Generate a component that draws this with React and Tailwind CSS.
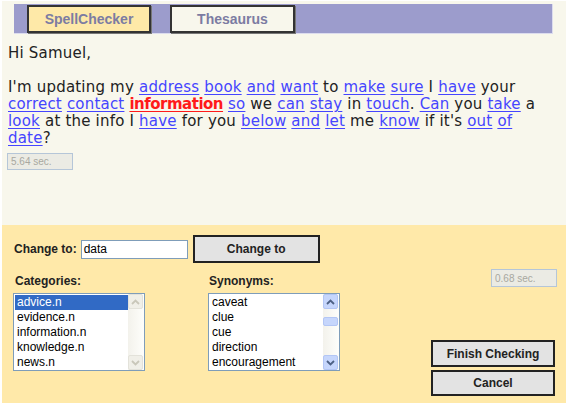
import React from "react";

function L({ children }) {
  return <span className="text-[#4545ff] underline decoration-1 underline-offset-2">{children}</span>;
}

function Chevron({ up, color }) {
  return (
    <svg width="9" height="6" viewBox="0 0 9 6">
      <path
        d={up ? "M1 5 L4.5 1.5 L8 5" : "M1 1 L4.5 4.5 L8 1"}
        fill="none"
        stroke={color}
        strokeWidth="1.8"
      />
    </svg>
  );
}

function Scrollbar({ active }) {
  const btn = active
    ? "bg-[#c6d6fc] border border-[#b3c6f5]"
    : "bg-[#f0efe8] border border-[#e3e2da]";
  const col = active ? "#4d6185" : "#c9c7ba";
  return (
    <div className="w-[16px] h-full flex flex-col bg-gradient-to-r from-[#f3f2ec] to-[#fefefb]">
      <div className={`h-[15px] w-[15px] rounded-[2px] flex items-center justify-center ${btn}`}>
        <Chevron up color={col} />
      </div>
      <div className="flex-1 relative">
        {active && (
          <div className="absolute left-0 top-[8px] h-[9px] w-[15px] rounded-[2px] bg-[#c6d6fc] border border-[#b3c6f5]" />
        )}
      </div>
      <div className={`h-[15px] w-[15px] rounded-[2px] flex items-center justify-center ${btn}`}>
        <Chevron color={col} />
      </div>
    </div>
  );
}

function ListBox({ items, selected, active }) {
  return (
    <div className="w-[132px] h-[78px] border border-[#7f9db9] bg-white flex font-['Liberation_Sans',sans-serif] text-[12px] text-black">
      <div className="flex-1 pt-[1px] pl-[1px] overflow-hidden">
        {items.map((it, i) => (
          <div
            key={it}
            className={`h-[15px] leading-[15px] px-[2px] whitespace-nowrap ${
              i === selected ? "bg-[#316ac5] text-white" : ""
            }`}
          >
            {it}
          </div>
        ))}
      </div>
      <Scrollbar active={active} />
    </div>
  );
}

export default function App() {
  return (
    <div className="w-[572px] h-[409px] bg-white pt-[1px] pl-[2px]">
      <div className="w-[564px] bg-[#f8f7ec]">
        <div className="h-[224px] pt-[3px]">
          <div className="ml-[12px] w-[539px] h-[30px] bg-[#9c9ccc] border-r border-b border-[#dcdcee] flex items-start pl-[13px] pt-[1px] gap-[19px]">
            <div className="w-[124px] h-[28px] bg-[#fee9a8] border-2 border-[#333] shadow-[1px_1px_0_#777] flex items-center justify-center font-['Liberation_Sans',sans-serif] font-bold text-[14px] text-[#7c7ca2]">
              SpellChecker
            </div>
            <div className="w-[125px] h-[28px] bg-[#f8f7ec] border-2 border-[#333] shadow-[1px_1px_0_#777] flex items-center justify-center font-['Liberation_Sans',sans-serif] font-bold text-[14px] text-[#7c7ca2]">
              Thesaurus
            </div>
          </div>
          <div className="mt-[11px] pl-[6px] font-['DejaVu_Sans',sans-serif] text-[15px] tracking-[0.2px] leading-[17px] text-[#222] whitespace-nowrap">
            <div>Hi Samuel,</div>
            <div>&nbsp;</div>
            <div>
              I'm updating my <L>address</L> <L>book</L> <L>and</L> <L>want</L> to <L>make</L> <L>sure</L> I <L>have</L> your
            </div>
            <div>
              <L>correct</L> <L>contact</L>{" "}
              <span className="text-[#ff1a1a] font-bold tracking-[-0.5px] underline decoration-1 underline-offset-2">information</span>{" "}
              <L>so</L> we <L>can</L> <L>stay</L> in <L>touch</L>. <L>Can</L> you <L>take</L> a
            </div>
            <div>
              <L>look</L> at the info I <L>have</L> for you <L>below</L> <L>and</L> <L>let</L> me <L>know</L> if it's <L>out</L> <L>of</L>
            </div>
            <div>
              <L>date</L>?
            </div>
          </div>
          <div className="mt-[6px] ml-[5px] w-[66px] h-[17px] bg-[#ebebe4] border border-[#b5c6d8] flex items-center pl-[3px] font-['Liberation_Sans',sans-serif] text-[10px] text-[#a8a8a0]">
            5.64 sec.
          </div>
        </div>

        <div className="h-[178px] bg-[#ffe9a9] pl-[12px] pr-[9px] pt-[10px] font-['Liberation_Sans',sans-serif]">
          <div className="flex items-center h-[28px]">
            <span className="font-bold text-[12px] text-[#222]">Change to:</span>
            <div className="ml-[4px] w-[107px] h-[19px] bg-white border border-[#7f9db9] flex items-center pl-[2px] text-[12px] text-black">
              data
            </div>
            <div className="ml-[5px] w-[127px] h-[28px] bg-[#e3e3e3] border-2 border-[#222] flex items-center justify-center font-bold text-[12px] text-[#222]">
              Change to
            </div>
          </div>
          <div className="flex">
            <div className="w-[195px] pt-[11px]">
              <div className="leading-[14px] font-bold text-[12px] text-[#222] pl-[1px]">Categories:</div>
              <div className="mt-[5px] -ml-[1px]">
                <ListBox
                  items={["advice.n", "evidence.n", "information.n", "knowledge.n", "news.n"]}
                  selected={0}
                />
              </div>
            </div>
            <div className="w-[132px] pt-[11px]">
              <div className="leading-[14px] font-bold text-[12px] text-[#222]">Synonyms:</div>
              <div className="mt-[5px] -ml-[1px]">
                <ListBox
                  items={["caveat", "clue", "cue", "direction", "encouragement"]}
                  selected={-1}
                  active
                />
              </div>
            </div>
            <div className="flex-1 flex flex-col items-end">
              <div className="mt-[6px] w-[66px] h-[18px] bg-[#ebebe4] border border-[#b5c6d8] flex items-center pl-[3px] text-[10px] text-[#a8a8a0]">
                0.68 sec.
              </div>
              <div className="mt-[53px] mr-[2px] w-[124px] h-[27px] bg-[#e3e3e3] border-2 border-[#222] flex items-center justify-center font-bold text-[12px] text-[#222]">
                Finish Checking
              </div>
              <div className="mt-[3px] mr-[2px] w-[124px] h-[26px] bg-[#e3e3e3] border-2 border-[#222] flex items-center justify-center font-bold text-[12px] text-[#222]">
                Cancel
              </div>
            </div>
          </div>
        </div>
      </div>
    </div>
  );
}
